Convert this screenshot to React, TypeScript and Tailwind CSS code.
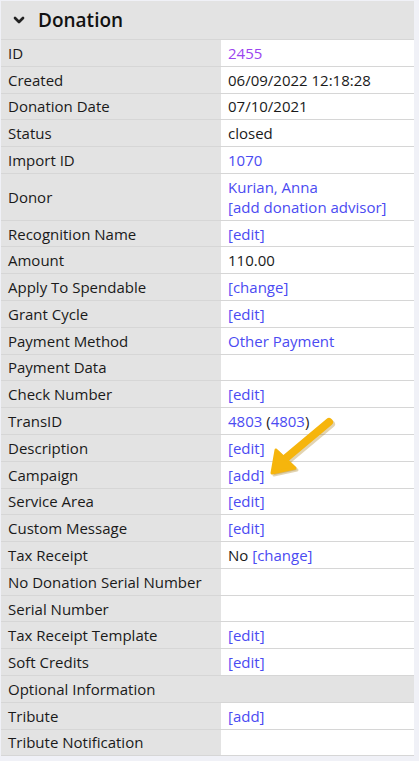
import { ChevronDown } from 'lucide-react'

type Row = {
  label: string
  value?: React.ReactNode
  section?: boolean
}

const link = 'text-[#4b4bf2]'

const rows: Row[] = [
  { label: 'ID', value: <span className="text-[#9b45f0]">2455</span> },
  { label: 'Created', value: '06/09/2022 12:18:28' },
  { label: 'Donation Date', value: '07/10/2021' },
  { label: 'Status', value: 'closed' },
  { label: 'Import ID', value: <span className={link}>1070</span> },
  {
    label: 'Donor',
    value: (
      <div className={link}>
        <div>Kurian, Anna</div>
        <div>[add donation advisor]</div>
      </div>
    ),
  },
  { label: 'Recognition Name', value: <span className={link}>[edit]</span> },
  { label: 'Amount', value: '110.00' },
  { label: 'Apply To Spendable', value: <span className={link}>[change]</span> },
  { label: 'Grant Cycle', value: <span className={link}>[edit]</span> },
  { label: 'Payment Method', value: <span className={link}>Other Payment</span> },
  { label: 'Payment Data' },
  { label: 'Check Number', value: <span className={link}>[edit]</span> },
  {
    label: 'TransID',
    value: (
      <span>
        <span className={link}>4803</span> (<span className={link}>4803</span>)
      </span>
    ),
  },
  { label: 'Description', value: <span className={link}>[edit]</span> },
  { label: 'Campaign', value: <span className={link}>[add]</span> },
  { label: 'Service Area', value: <span className={link}>[edit]</span> },
  { label: 'Custom Message', value: <span className={link}>[edit]</span> },
  {
    label: 'Tax Receipt',
    value: (
      <span>
        No <span className={link}>[change]</span>
      </span>
    ),
  },
  { label: 'No Donation Serial Number' },
  { label: 'Serial Number' },
  { label: 'Tax Receipt Template', value: <span className={link}>[edit]</span> },
  { label: 'Soft Credits', value: <span className={link}>[edit]</span> },
  { label: 'Optional Information', section: true },
  { label: 'Tribute', value: <span className={link}>[add]</span> },
  { label: 'Tribute Notification' },
]

function Arrow() {
  return (
    <svg
      className="absolute left-[262px] top-[412px] pointer-events-none"
      width="78"
      height="74"
      viewBox="0 0 78 74"
    >
      <g transform="translate(2 2)" stroke="#a07000" strokeOpacity="0.3" fill="#a07000" fillOpacity="0.3">
        <line x1="67" y1="10" x2="24" y2="46" strokeWidth="8" strokeLinecap="round" />
        <polygon points="10,61 14,38 33,56" strokeWidth="3" strokeLinejoin="round" />
      </g>
      <line x1="67" y1="10" x2="24" y2="46" stroke="#f6b50c" strokeWidth="8" strokeLinecap="round" />
      <polygon points="10,61 14,38 33,56" fill="#f6b50c" stroke="#f6b50c" strokeWidth="3" strokeLinejoin="round" />
    </svg>
  )
}

export default function App() {
  return (
    <div className="relative w-[419px] h-[761px] bg-[#f0f1f7] pt-px pl-px font-['Open_Sans',sans-serif] text-[15px] text-[#1a1a1a]">
      <div className="w-[413px] bg-[#e3e3e3]">
        <div className="flex items-center h-[39px] border-b border-[#d6d6d6] pl-[10px]">
          <ChevronDown className="w-4 h-4 text-[#222]" strokeWidth={4} />
          <span className="ml-[11px] text-[19px] font-semibold text-[#111]">Donation</span>
        </div>
        {rows.map((r) =>
          r.section ? (
            <div
              key={r.label}
              className="flex items-center py-[2.9px] leading-[20px] border-b border-[#d6d6d6] pl-[7px]"
            >
              {r.label}
            </div>
          ) : (
            <div key={r.label} className="flex border-b border-[#d6d6d6] leading-[20px]">
              <div className="w-[220px] shrink-0 pl-[7px] py-[2.9px] flex items-center">{r.label}</div>
              <div className="flex-1 bg-white pl-[7px] py-[2.9px]">{r.value}</div>
            </div>
          ),
        )}
      </div>
      <Arrow />
    </div>
  )
}
